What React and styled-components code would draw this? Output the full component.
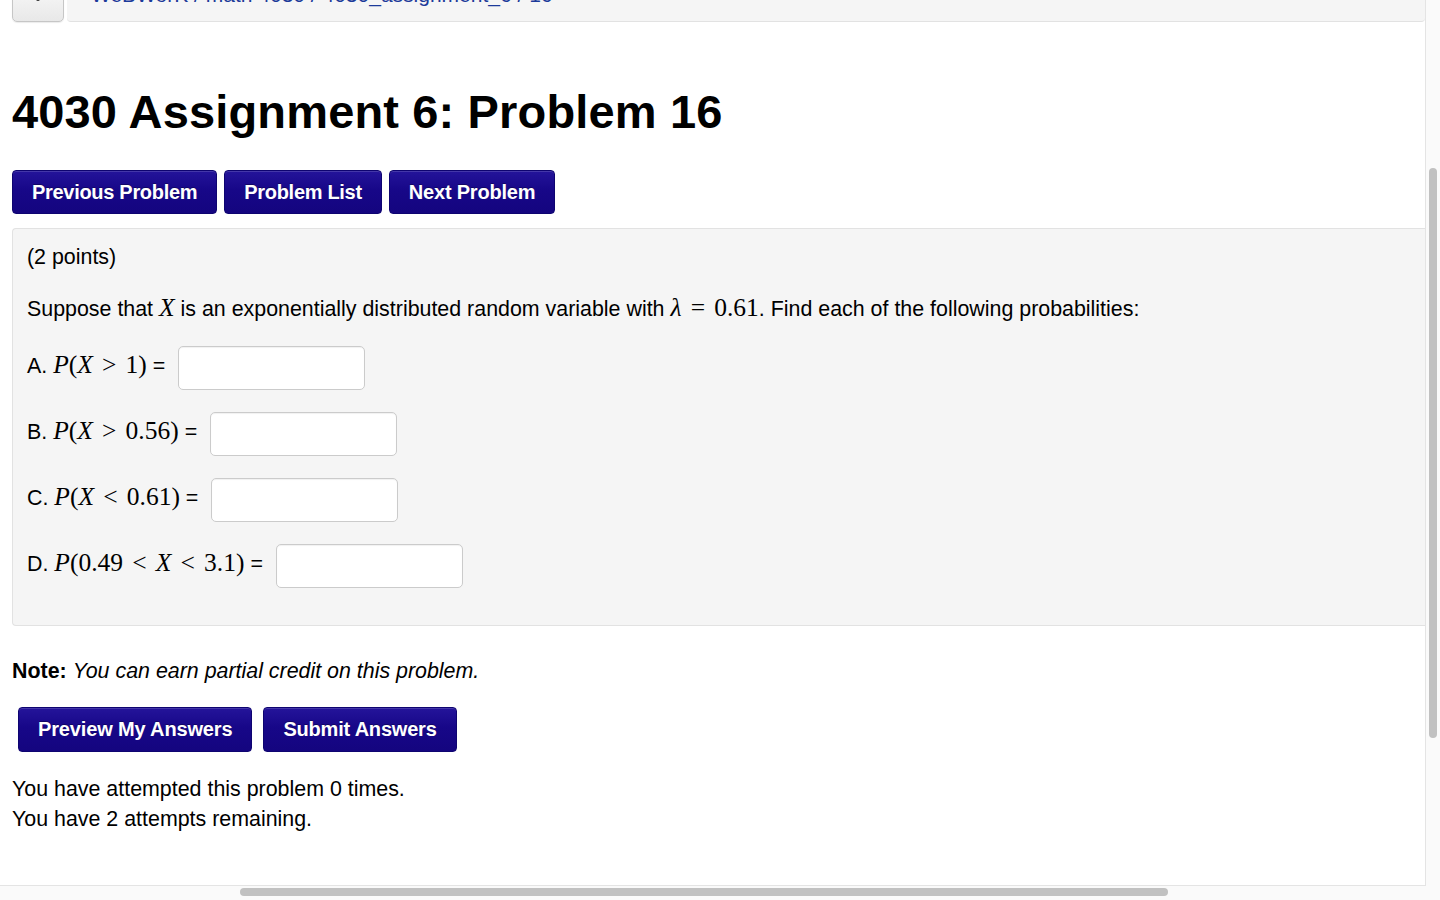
import React from 'react';
import styled, { createGlobalStyle } from 'styled-components';

const Global = createGlobalStyle`
  *, *::before, *::after { box-sizing: border-box; }
  html, body { margin: 0; padding: 0; background: #fff; overflow: hidden; }
  body { font-family: "Liberation Sans", Arial, Helvetica, sans-serif; color: #000; }
`;

const Frame = styled.div`
  width: 1440px;
  height: 900px;
  display: grid;
  grid-template-columns: 1426px 14px;
  grid-template-rows: 886px 14px;
  background: #fafafa;
  overflow: hidden;
`;

const Viewport = styled.div`
  overflow: hidden;
  background: #fff;
  border-right: 1px solid #e4e4e4;
  border-bottom: 1px solid #e4e4e4;
  padding-left: 12px;
`;

const VTrack = styled.div`
  background: #fafafa;
  padding: 168px 0 0 3px;
`;

const VThumb = styled.div`
  width: 8px;
  height: 570px;
  border-radius: 4px;
  background: #c1c1c1;
`;

const HTrack = styled.div`
  grid-column: 1 / -1;
  background: #fafafa;
  padding: 2px 0 0 240px;
`;

const HThumb = styled.div`
  width: 928px;
  height: 8px;
  border-radius: 4px;
  background: #c1c1c1;
`;

const TopRow = styled.div`
  display: flex;
  align-items: flex-end;
  gap: 3px;
  height: 50px;
  margin-top: -28px;
`;

const MenuButton = styled.div`
  width: 52px;
  height: 50px;
  flex: none;
  border: 1px solid #c6c6c6;
  border-radius: 0 0 5px 5px;
  background: linear-gradient(#ffffff, #e8e8e8);
  box-shadow: 0 1px 1px rgba(0,0,0,0.08);
  display: flex;
  justify-content: center;
  padding-top: 24px;
`;

const MenuDot = styled.span`
  width: 4px;
  height: 4px;
  border-radius: 50%;
  background: #333;
`;

const Crumbs = styled.div`
  flex: 1;
  height: 50px;
  background: #f5f5f5;
  border-bottom: 1px solid #e2e2e2;
  border-radius: 0 0 4px 4px;
  padding: 8px 0 0 24px;
  font-size: 21px;
  line-height: 30px;
  color: #1c3a9a;
  white-space: nowrap;
`;

const Title = styled.h1`
  margin: 62px 0 0;
  font-size: 47px;
  line-height: 56px;
  font-weight: 700;
  letter-spacing: 0.15px;
`;

const ButtonRow = styled.div`
  display: flex;
  gap: ${p => p.$gap}px;
  margin: ${p => p.$margin};
`;

const Button = styled.button`
  height: ${p => p.$h}px;
  padding: 0 19px;
  font-family: "Liberation Sans", Arial, sans-serif;
  font-size: 20px;
  font-weight: 700;
  letter-spacing: ${p => p.$ls}px;
  color: #fff;
  background: linear-gradient(#24149a, #170788 45%, #14057f);
  border: 1px solid #0e0470;
  border-radius: 4px;
  text-shadow: 0 -1px 0 rgba(0,0,0,0.3);
  box-shadow: inset 0 1px 0 rgba(255,255,255,0.15);
  cursor: pointer;
`;

const ProblemBox = styled.div`
  margin-top: 14px;
  background: #f5f5f5;
  border: 1px solid #e2e2e2;
  border-right: none;
  border-radius: 4px 0 0 4px;
  padding: 13px 14px 37px;
`;

const Para = styled.p`
  margin: 0 0 ${p => p.$mb ?? 21}px;
  font-size: 21.4px;
  line-height: 30px;
  white-space: nowrap;
`;

const Mi = styled.span`
  font-family: "Liberation Serif", "Times New Roman", serif;
  font-style: italic;
  font-size: 25.5px;
`;

const Mn = styled.span`
  font-family: "Liberation Serif", "Times New Roman", serif;
  font-size: 25.5px;
`;

const Mo = styled.span`
  font-family: "Liberation Serif", "Times New Roman", serif;
  font-size: 25.5px;
  margin: 0 ${p => (p.$rel ? '0.36em' : '0')};
`;

const Row = styled.div`
  display: flex;
  align-items: center;
  height: 44px;
  margin-top: 22px;
  font-size: 21.4px;
  line-height: 30px;
  padding-bottom: 5px;
  white-space: pre;
`;

const AnswerInput = styled.input`
  width: 187px;
  height: 44px;
  margin: 5px 0 0 13px;
  border: 1px solid #cbcbcb;
  border-radius: 5px;
  background: #fff;
  box-shadow: inset 0 1px 1px rgba(0,0,0,0.06);
  font-size: 20px;
`;

const Note = styled.p`
  margin: 30px 0 0;
  font-size: 21.4px;
  line-height: 30px;
  b { font-weight: 700; }
  i { font-style: italic; }
`;

const Status = styled.div`
  margin-top: 22px;
  font-size: 21.4px;
  line-height: 30px;
`;

const Math = ({ parts }) => (
  <span>
    {parts.map(([k, t], i) =>
      k === 'i' ? <Mi key={i}>{t}</Mi> :
      k === 'n' ? <Mn key={i}>{t}</Mn> :
      <Mo key={i} $rel={k === 'r'}>{t}</Mo>
    )}
  </span>
);

const rows = [
  { label: 'A.', parts: [['i', 'P'], ['o', '('], ['i', 'X'], ['r', '>'], ['n', '1'], ['o', ')']] },
  { label: 'B.', parts: [['i', 'P'], ['o', '('], ['i', 'X'], ['r', '>'], ['n', '0.56'], ['o', ')']] },
  { label: 'C.', parts: [['i', 'P'], ['o', '('], ['i', 'X'], ['r', '<'], ['n', '0.61'], ['o', ')']] },
  { label: 'D.', parts: [['i', 'P'], ['o', '('], ['n', '0.49'], ['r', '<'], ['i', 'X'], ['r', '<'], ['n', '3.1'], ['o', ')']] },
];

export default function App() {
  return (
    <>
      <Global />
      <Frame>
        <Viewport>
          <TopRow>
            <MenuButton><MenuDot /></MenuButton>
            <Crumbs>WeBWorK / math 4030 / 4030_assignment_6 / 16</Crumbs>
          </TopRow>

          <Title>4030 Assignment 6: Problem 16</Title>

          <ButtonRow $gap={7} $margin="30px 0 0">
            <Button $h={44} $ls={-0.3}>Previous Problem</Button>
            <Button $h={44} $ls={-0.3}>Problem List</Button>
            <Button $h={44} $ls={-0.2}>Next Problem</Button>
          </ButtonRow>

          <ProblemBox>
            <Para>(2 points)</Para>
            <Para $mb={0}>
              Suppose that <Mi>X</Mi> is an exponentially distributed random variable with{' '}
              <Mi>λ</Mi><Mo $rel>=</Mo><Mn>0.61</Mn>. Find each of the following probabilities:
            </Para>
            {rows.map(r => (
              <Row key={r.label}>
                {r.label} <Math parts={r.parts} /> =
                <AnswerInput type="text" />
              </Row>
            ))}
          </ProblemBox>

          <Note><b>Note:</b> <i>You can earn partial credit on this problem.</i></Note>

          <ButtonRow $gap={11} $margin="21px 0 0 6px">
            <Button $h={45} $ls={-0.15}>Preview My Answers</Button>
            <Button $h={45} $ls={-0.2}>Submit Answers</Button>
          </ButtonRow>

          <Status>
            You have attempted this problem 0 times.<br />
            You have 2 attempts remaining.
          </Status>
        </Viewport>
        <VTrack><VThumb /></VTrack>
        <HTrack><HThumb /></HTrack>
      </Frame>
    </>
  );
}
